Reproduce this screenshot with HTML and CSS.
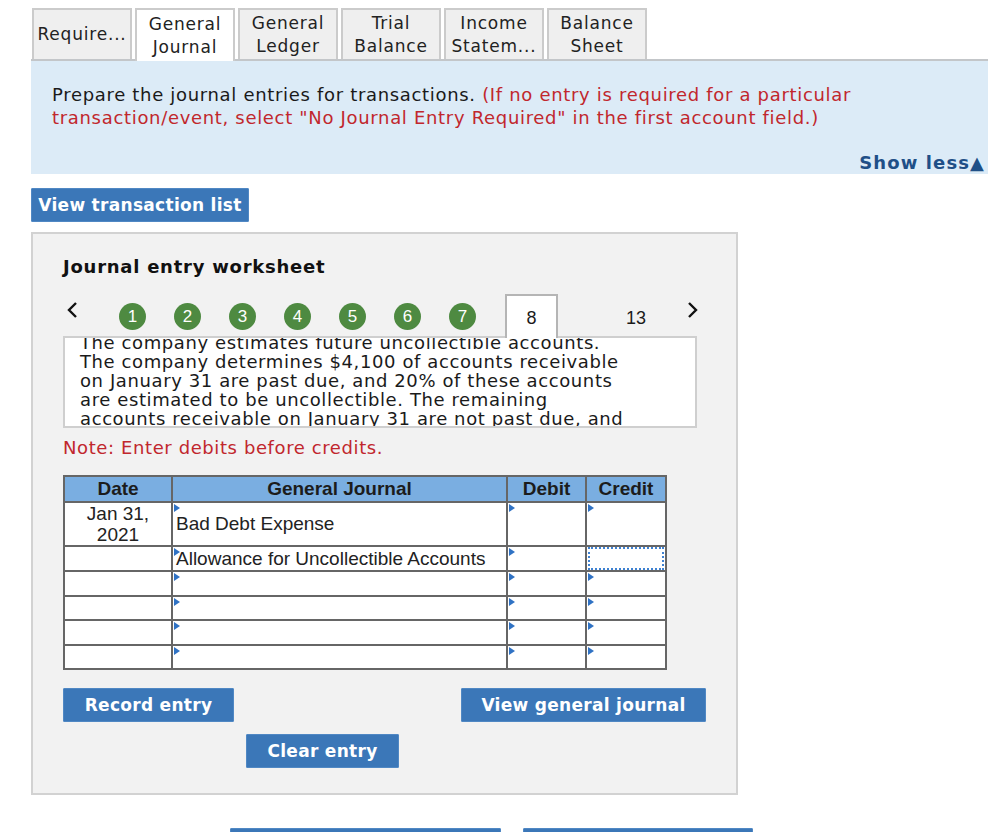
FILE: index.html
```html
<!DOCTYPE html>
<html lang="en">
<head>
    <meta charset="utf-8">
    <title>Journal Entry Worksheet</title>
    <link rel="stylesheet" href="styles.css">
</head>
<body>
    <!-- Question tabs -->
    <div class="tabs">
        <div class="tab">Require...</div>
        <div class="tab tab-active">General<br>Journal</div>
        <div class="tab">General<br>Ledger</div>
        <div class="tab">Trial<br>Balance</div>
        <div class="tab">Income<br>Statem...</div>
        <div class="tab">Balance<br>Sheet</div>
    </div>

    <div class="instructions">
        <p class="prompt">Prepare the journal entries for transactions. <span class="prompt-red">(If no entry is required for a particular transaction/event, select "No Journal Entry Required" in the first account field.)</span></p>
        <div class="show-less">Show less&#9650;</div>
    </div>

    <button class="btn btn-list" type="button">View transaction list</button>

    <div class="worksheet">
        <h2 class="worksheet-title">Journal entry worksheet</h2>

        <div class="nav">
            <span class="nav-arrow nav-prev">
                <svg width="12" height="18" viewBox="0 0 12 18"><polyline points="10,2 3,9 10,16" fill="none" stroke="#111" stroke-width="2.4"/></svg>
            </span>
            <span class="step"><span class="step-dot">1</span></span>
            <span class="step"><span class="step-dot">2</span></span>
            <span class="step"><span class="step-dot">3</span></span>
            <span class="step"><span class="step-dot">4</span></span>
            <span class="step"><span class="step-dot">5</span></span>
            <span class="step"><span class="step-dot">6</span></span>
            <span class="step"><span class="step-dot">7</span></span>
            <span class="step-current">8</span>
            <span class="step-total">13</span>
            <span class="nav-arrow nav-next">
                <svg width="12" height="18" viewBox="0 0 12 18"><polyline points="2,2 9,9 2,16" fill="none" stroke="#111" stroke-width="2.4"/></svg>
            </span>
        </div>

        <div class="description">
            <div class="description-text">
                The company estimates future uncollectible accounts.<br>
                The company determines $4,100 of accounts receivable<br>
                on January 31 are past due, and 20% of these accounts<br>
                are estimated to be uncollectible. The remaining<br>
                accounts receivable on January 31 are not past due, and
            </div>
        </div>

        <div class="note">Note: Enter debits before credits.</div>

        <table class="journal">
            <colgroup>
                <col class="col-date">
                <col class="col-account">
                <col class="col-debit">
                <col class="col-credit">
            </colgroup>
            <thead>
                <tr>
                    <th>Date</th>
                    <th>General Journal</th>
                    <th>Debit</th>
                    <th>Credit</th>
                </tr>
            </thead>
            <tbody>
                <tr class="row-first">
                    <td class="date">Jan 31,<br>2021</td>
                    <td class="entry">Bad Debt Expense</td>
                    <td class="entry"></td>
                    <td class="entry"></td>
                </tr>
                <tr>
                    <td></td>
                    <td class="entry">Allowance for Uncollectible Accounts</td>
                    <td class="entry"></td>
                    <td class="focus-cell"><div class="focus-box"></div></td>
                </tr>
                <tr>
                    <td></td>
                    <td class="entry"></td>
                    <td class="entry"></td>
                    <td class="entry"></td>
                </tr>
                <tr>
                    <td></td>
                    <td class="entry"></td>
                    <td class="entry"></td>
                    <td class="entry"></td>
                </tr>
                <tr>
                    <td></td>
                    <td class="entry"></td>
                    <td class="entry"></td>
                    <td class="entry"></td>
                </tr>
                <tr>
                    <td></td>
                    <td class="entry"></td>
                    <td class="entry"></td>
                    <td class="entry"></td>
                </tr>
            </tbody>
        </table>

        <div class="actions">
            <button class="btn btn-record" type="button">Record entry</button>
            <button class="btn btn-view" type="button">View general journal</button>
        </div>
        <button class="btn btn-clear" type="button">Clear entry</button>
    </div>

    <!-- Buttons below the fold -->
    <div class="footer-buttons">
        <button class="btn btn-footer-left" type="button"></button>
        <button class="btn btn-footer-right" type="button"></button>
    </div>
</body>
</html>
```

FILE: styles.css
```css
body {
    font-family: "DejaVu Sans", Verdana, sans-serif;
    background-color: #fff;
    color: #1a1a1a;
    margin: 0;
    padding: 0;
}

/* Tabs */

.tabs {
    display: flex;
    gap: 3px;
    padding: 8px 0 0 32px;
    position: relative;
    z-index: 1;
}

.tab {
    box-sizing: border-box;
    width: 100px;
    height: 51px;
    display: flex;
    align-items: center;
    justify-content: center;
    text-align: center;
    font-size: 17px;
    letter-spacing: 0.8px;
    line-height: 23px;
    color: #222;
    background-color: #efefef;
    border: 2px solid #cbcbcb;
    border-bottom: none;
}

.tab-active {
    background-color: #fff;
    height: 53px;
    margin-bottom: -2px;
}

/* Instructions band */

.instructions {
    box-sizing: border-box;
    margin-left: 31px;
    height: 115px;
    padding: 22px 3px 0 21px;
    background-color: #dcebf7;
    border-top: 2px solid #c3c6c9;
}

.prompt {
    margin: 0;
    font-size: 18px;
    letter-spacing: 0.68px;
    line-height: 23px;
    max-width: 840px;
}

.prompt-red {
    color: #c1272d;
}

.show-less {
    margin-top: 23px;
    text-align: right;
    font-size: 18px;
    letter-spacing: 1.1px;
    font-weight: bold;
    line-height: 22px;
    color: #1f4f87;
}

/* Buttons */

.btn {
    box-sizing: border-box;
    height: 34px;
    padding: 0;
    font-family: "DejaVu Sans", Verdana, sans-serif;
    font-size: 17px;
    letter-spacing: 0.3px;
    font-weight: bold;
    color: #fff;
    background-color: #3b77b8;
    border: 1px solid #5088c4;
    border-radius: 1px;
    cursor: pointer;
}

.btn-list {
    display: block;
    margin: 14px 0 0 31px;
    width: 218px;
}

/* Worksheet panel */

.worksheet {
    box-sizing: border-box;
    width: 707px;
    height: 563px;
    margin: 10px 0 0 31px;
    padding: 22px 0 0 30px;
    background-color: #f2f2f2;
    border: 2px solid #d2d2d2;
}

.worksheet-title {
    margin: 0;
    font-size: 18px;
    letter-spacing: 0.75px;
    line-height: 22px;
    color: #111;
}

.nav {
    display: flex;
    align-items: center;
    height: 42px;
    margin-top: 16px;
    position: relative;
    z-index: 1;
}

.nav-arrow {
    display: flex;
    width: 12px;
    margin-top: -10px;
}

.nav-prev {
    margin-left: 3px;
    margin-right: 27px;
}

.step {
    display: flex;
    justify-content: center;
    width: 55px;
    margin-top: 2px;
}

.step-dot {
    width: 27px;
    height: 27px;
    border-radius: 50%;
    background-color: #4e8a41;
    color: #fff;
    font-family: "Liberation Sans", Arial, sans-serif;
    font-size: 17px;
    line-height: 27px;
    text-align: center;
}

.step-current {
    box-sizing: border-box;
    width: 53px;
    height: 44px;
    margin: 0 0 -2px 15px;
    align-self: flex-start;
    padding-top: 12px;
    text-align: center;
    font-family: "Liberation Sans", Arial, sans-serif;
    font-size: 18px;
    background-color: #fff;
    border: 2px solid #b5b5b5;
    border-bottom: none;
}

.step-total {
    width: 40px;
    margin-left: 58px;
    margin-top: 6px;
    text-align: center;
    font-family: "Liberation Sans", Arial, sans-serif;
    font-size: 18px;
}

.nav-next {
    margin-left: 31px;
}

.description {
    box-sizing: border-box;
    width: 634px;
    height: 92px;
    overflow: hidden;
    background-color: #fff;
    border: 2px solid #cfcfcf;
    padding: 0 10px 0 15px;
}

.description-text {
    margin-top: -5px;
    font-size: 18px;
    letter-spacing: 0.6px;
    line-height: 19px;
    white-space: nowrap;
    color: #1a1a1a;
}

.note {
    margin-top: 9px;
    font-size: 18px;
    letter-spacing: 0.6px;
    line-height: 22px;
    color: #c1272d;
}

/* Journal table */

.journal {
    margin-top: 16px;
    width: 602px;
    table-layout: fixed;
    border-collapse: collapse;
    font-family: "Liberation Sans", Arial, sans-serif;
    font-size: 19px;
    background-color: #fff;
}

.col-date {
    width: 108px;
}

.col-account {
    width: 335px;
}

.col-debit {
    width: 79px;
}

.col-credit {
    width: 80px;
}

.journal th,
.journal td {
    border: 2px solid #666;
    padding: 0;
}

.journal th {
    height: 24px;
    background-color: #7aaee1;
    font-weight: bold;
    color: #1c1c1c;
}

.journal td {
    height: 22.5px;
    position: relative;
}

.journal .row-first td {
    height: 41px;
}

.journal .date {
    text-align: center;
    line-height: 21px;
    vertical-align: top;
    padding-top: 0;
    color: #222;
}

.journal .entry {
    padding-left: 3px;
    color: #222;
}

.journal .entry::before {
    content: "";
    position: absolute;
    left: 1px;
    top: 1px;
    border-left: 6px solid #2f72c4;
    border-top: 4px solid transparent;
    border-bottom: 4px solid transparent;
}

.focus-box {
    height: 19px;
    margin: 0 1px 0 1px;
    border: 2px dotted #3f82d2;
}

/* Action buttons */

.actions {
    display: flex;
    justify-content: space-between;
    width: 643px;
    margin-top: 18px;
}

.btn-record {
    width: 171px;
}

.btn-view {
    width: 245px;
}

.btn-clear {
    display: block;
    width: 153px;
    margin: 12px 0 0 183px;
}

.footer-buttons {
    display: flex;
    gap: 22px;
    margin: 33px 0 0 230px;
}

.btn-footer-left {
    width: 271px;
}

.btn-footer-right {
    width: 230px;
}
```
